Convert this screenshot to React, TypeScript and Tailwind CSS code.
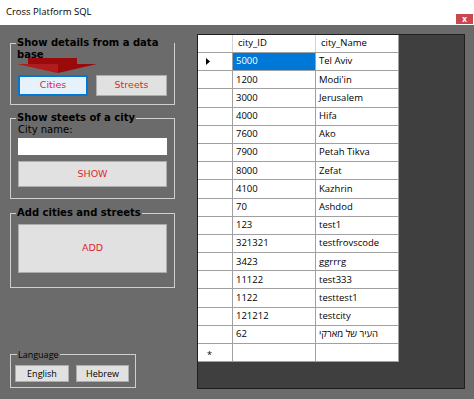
import React from 'react';

const rows: [string, string][] = [
  ['5000', 'Tel Aviv'],
  ['1200', "Modi'in"],
  ['3000', 'Jerusalem'],
  ['4000', 'Hifa'],
  ['7600', 'Ako'],
  ['7900', 'Petah Tikva'],
  ['8000', 'Zefat'],
  ['4100', 'Kazhrin'],
  ['70', 'Ashdod'],
  ['123', 'test1'],
  ['321321', 'testfrovscode'],
  ['3423', 'ggrrrg'],
  ['11122', 'test333'],
  ['1122', 'testtest1'],
  ['121212', 'testcity'],
  ['62', 'העיר של מארקי'],
];

const groupTitle =
  "font-['DejaVu_Sans',sans-serif] font-bold text-[10px] leading-[12px] text-black bg-[#6b6b6b] px-[1px] ml-[5px] w-fit";
const redBtn =
  "bg-[#e1e1e1] border border-[#adadad] text-[#e0262e] font-['DejaVu_Sans',sans-serif] text-[9.5px] flex items-center justify-center";
const smallBtn =
  "bg-[#e1e1e1] border border-[#adadad] text-black text-[9px] flex items-center justify-center h-[17px]";

function DataGrid() {
  return (
    <div className="w-[201px] bg-white text-[9.5px] text-black font-['Open_Sans','DejaVu_Sans',sans-serif]">
      {/* Header */}
      <div className="flex h-[18px] border-b border-[#a0a0a0]">
        <div className="w-[35px] border-r border-[#d4d4d4]" />
        <div className="w-[83px] border-r border-[#d4d4d4] pl-[5px] flex items-center">city_ID</div>
        <div className="w-[83px] border-r border-[#a0a0a0] pl-[5px] flex items-center">city_Name</div>
      </div>

      {rows.map(([id, name], i) => (
        <div key={i} className="flex h-[18.2px] border-b border-[#a0a0a0]">
          <div className="w-[35px] border-r border-[#a0a0a0] flex items-center pl-[8px]">
            {i === 0 && (
              <svg width="4" height="7" viewBox="0 0 4 7">
                <polygon points="0,0 4,3.5 0,7" fill="#000" />
              </svg>
            )}
          </div>
          <div
            className={`w-[83px] border-r border-[#a0a0a0] pl-[3px] flex items-center ${
              i === 0 ? 'bg-[#0078d7] text-white' : ''
            }`}
          >
            {id}
          </div>
          <div className="w-[83px] border-r border-[#a0a0a0] pl-[3px] flex items-center whitespace-nowrap">
            {name}
          </div>
        </div>
      ))}

      {/* New row */}
      <div className="flex h-[18.2px] border-b border-[#a0a0a0]">
        <div className="w-[35px] border-r border-[#a0a0a0] flex items-center pl-[9px] text-[9px] leading-none pt-[3px]">
          *
        </div>
        <div className="w-[83px] border-r border-[#a0a0a0]" />
        <div className="w-[83px] border-r border-[#a0a0a0]" />
      </div>
    </div>
  );
}

export default function App() {
  return (
    <div className="w-[474px] h-[399px] bg-[#6b6b6b] flex flex-col overflow-hidden font-['Open_Sans','Liberation_Sans',sans-serif]">
      {/* Title bar */}
      <div className="h-[25px] bg-white flex justify-between pl-[6px] pr-[1px]">
        <span className="text-[9.5px] text-black self-center">Cross Platform SQL</span>
        <div className="w-[17px] h-[10px] mt-[14px] bg-[#c9484d] text-white text-[8px] leading-[10px] text-center font-bold">
          x
        </div>
      </div>

      <div className="flex flex-1">
        {/* Left controls */}
        <div className="w-[197px] pl-[10px] pt-[18px] pb-[11px] flex flex-col">
          {/* Group 1 */}
          <div className="w-[165px] h-[62px] border border-[#cfcfcf] flex flex-col">
            <div className={`${groupTitle} -mt-[7px] w-[146px]`}>Show details from a data base</div>
            <svg className="ml-[7px] -mt-[3px]" width="80" height="16" viewBox="0 0 80 16">
              <polygon points="10,0 59,0 59,6 79,6 40,15 0,6 10,6" fill="#9b0a0a" />
              <polygon points="0,6 40,15 40,6" fill="#c0262a" opacity="0.6" />
            </svg>
            <div className="flex ml-[7px] mt-[1px] gap-[8px]">
              <div className="w-[70px] h-[21px] bg-[#e5f1fb] border-2 border-[#0078d7] text-[#e0262e] font-['DejaVu_Sans',sans-serif] text-[9.5px] flex items-center justify-center">
                Cities
              </div>
              <div className={`${redBtn} w-[71px] h-[21px]`}>Streets</div>
            </div>
          </div>

          {/* Group 2 */}
          <div className="w-[165px] h-[81px] mt-[13px] border border-[#cfcfcf] flex flex-col">
            <div className={`${groupTitle} -mt-[7px]`}>Show steets of a city</div>
            <div className="ml-[7px] -mt-[1px] font-['DejaVu_Sans',sans-serif] text-[10px] leading-[13px] text-black">
              City name:
            </div>
            <div className="ml-[7px] mt-[2px] w-[149px] h-[17px] bg-white" />
            <div className={`${redBtn} ml-[7px] mt-[6px] w-[149px] h-[26px]`}>SHOW</div>
          </div>

          {/* Group 3 */}
          <div className="w-[165px] h-[75px] mt-[14px] border border-[#cfcfcf] flex flex-col">
            <div className={`${groupTitle} -mt-[7px]`}>Add cities and streets</div>
            <div className={`${redBtn} ml-[7px] mt-[5px] w-[149px] h-[49px]`}>ADD</div>
          </div>

          {/* Language */}
          <div className="w-[126px] h-[34px] mt-auto border border-[#cfcfcf] flex flex-col">
            <div className="-mt-[6px] ml-[6px] px-[1px] w-fit bg-[#6b6b6b] text-[9px] leading-[11px] text-black">
              Language
            </div>
            <div className="flex ml-[4px] mt-[5px] gap-[7px]">
              <div className={`${smallBtn} w-[54px]`}>English</div>
              <div className={`${smallBtn} w-[53px]`}>Hebrew</div>
            </div>
          </div>
        </div>

        {/* Data grid view */}
        <div className="mt-[9px] w-[268px] h-[355px] border border-[#1f1f1f] bg-[#3f3f3f]">
          <DataGrid />
        </div>
      </div>
    </div>
  );
}
